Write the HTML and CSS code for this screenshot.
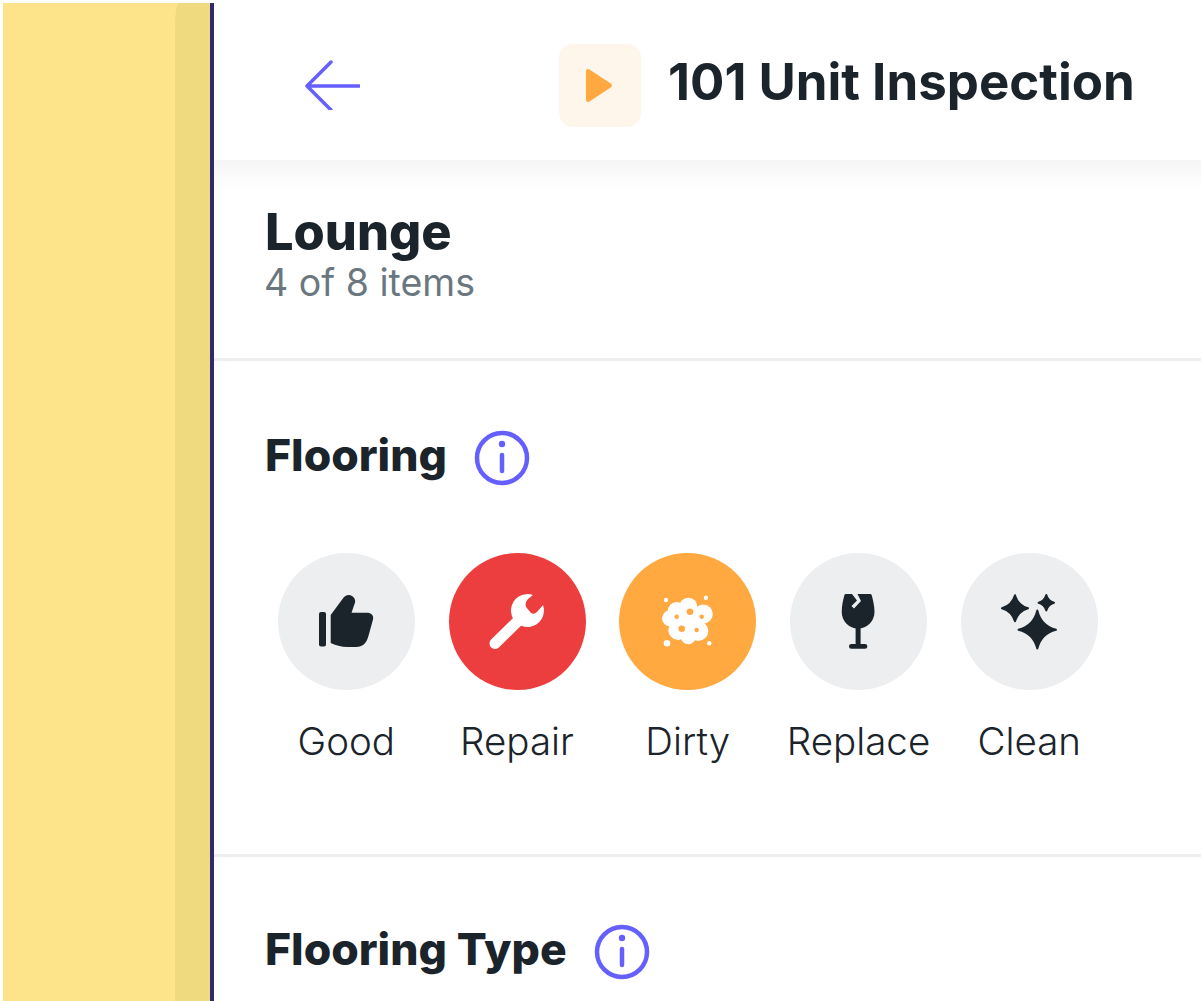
FILE: index.html
```html
<!DOCTYPE html>
<html>
<head>
    <meta charset="UTF-8">
    <title>101 Unit Inspection</title>
    <link rel="stylesheet" href="styles.css">
</head>
<body>
    <div class="screen">
        <div class="side">
            <div class="side-fold"></div>
        </div>
        <main class="panel">
            <header class="topbar">
                <svg class="back" width="56" height="50" viewBox="0 0 56 50"><path d="M27 2 L3 26 L27 50 M3 26 H55" fill="none" stroke="#655ffe" stroke-width="3.5" stroke-linecap="round" stroke-linejoin="round"/></svg>
                <div class="play-box">
                    <svg width="28" height="36" viewBox="0 0 28 36"><path d="M2 3 L24 17.5 L2 32 Z" fill="#ffa940" stroke="#ffa940" stroke-width="4" stroke-linejoin="round"/></svg>
                </div>
                <h1>101 Unit Inspection</h1>
            </header>
            <div class="topbar-shade"></div>

            <section class="room">
                <h2>Lounge</h2>
                <p>4 of 8 items</p>
            </section>

            <section class="group">
                <div class="group-title">
                    <h3>Flooring</h3>
                    <svg class="info" width="56" height="56" viewBox="0 0 56 56"><circle cx="28" cy="28" r="25" fill="none" stroke="#655ffe" stroke-width="4.5"/><circle cx="28" cy="14" r="3.2" fill="#655ffe"/><path d="M28 25 V41" stroke="#655ffe" stroke-width="4.5" stroke-linecap="round"/></svg>
                </div>
                <div class="options">
                    <div class="option">
                        <div class="disc">
                            <svg width="137" height="137" viewBox="0 0 137 137"><rect x="41" y="59" width="7" height="34.5" rx="2" fill="#1b242b"/><path d="M52.7 62 L64.5 46 C67 42 71 41 74 43 C77 45 78 48 76.5 51 L73.5 59.7 H89 C93 59.7 96 62 95 66.5 L91 81 C89 89 86 94 78 94 H70 C63 94 57 92 52.7 90 Z" fill="#1b242b"/></svg>
                        </div>
                        <span>Good</span>
                    </div>
                    <div class="option">
                        <div class="disc disc-red">
                            <svg width="137" height="137" viewBox="0 0 137 137"><path d="M46 90.5 L70 67" stroke="#fff" stroke-width="11" stroke-linecap="round"/><path d="M94 52 A16.5 16.5 0 1 1 84 42 L79 46 Q75.5 50 77 54 L82 60 Q85 62 88 59 Z" fill="#fff"/></svg>
                        </div>
                        <span>Repair</span>
                    </div>
                    <div class="option">
                        <div class="disc disc-orange">
                            <svg width="137" height="137" viewBox="0 0 137 137">
                                <g transform="translate(-6 0)">
                                    <g fill="#fff">
                                        <circle cx="75.3" cy="53.7" r="9"/><circle cx="63.7" cy="58" r="9"/><circle cx="90.3" cy="61" r="9.5"/><circle cx="57" cy="65.3" r="8"/>
                                        <circle cx="65.3" cy="77" r="10"/><circle cx="85.3" cy="78" r="10"/><circle cx="75.3" cy="83.7" r="7.5"/><circle cx="75.3" cy="67" r="15"/>
                                        <circle cx="53" cy="47" r="2.2"/><circle cx="93" cy="44.7" r="2.2"/><circle cx="54" cy="90.3" r="3.3"/><circle cx="96.3" cy="90.3" r="2.2"/>
                                    </g>
                                    <g fill="#ffa940">
                                        <circle cx="77" cy="58.7" r="3.3"/><circle cx="63.7" cy="63.7" r="2.2"/><circle cx="88.7" cy="63.7" r="2.2"/><circle cx="68.7" cy="75.7" r="3.3"/><circle cx="83.7" cy="77" r="2.2"/>
                                    </g>
                                </g>
                            </svg>
                        </div>
                        <span>Dirty</span>
                    </div>
                    <div class="option">
                        <div class="disc">
                            <svg width="137" height="137" viewBox="0 0 137 137"><path d="M56 41 H80 C81 41 81.5 41.5 81.8 42.5 C83 47 84.5 53 84.5 59 C84.5 68 77 75.5 68 75.5 C59 75.5 51.7 68 51.7 59 C51.7 53 53 47 54.3 42.5 C54.6 41.5 55 41 56 41 Z" fill="#1b242b"/><path d="M65.6 74 H70.6 V92 H65.6 Z" fill="#1b242b"/><rect x="59" y="91" width="18.3" height="4.7" rx="2.3" fill="#1b242b"/><path d="M62 41 L67 47.5 L61.5 53 L64 55.5 L71 48 L67.5 41 Z" fill="#edeef0"/></svg>
                        </div>
                        <span>Replace</span>
                    </div>
                    <div class="option">
                        <div class="disc">
                            <svg width="137" height="137" viewBox="0 0 137 137" fill="#1b242b" stroke="#1b242b" stroke-width="2" stroke-linejoin="round"><path d="M54 42.3 Q57 52.3 67 55.3 Q57 58.3 54 68.3 Q51 58.3 41 55.3 Q51 52.3 54 42.3 Z"/><path d="M85.3 42 Q87 48 93 49.7 Q87 51.4 85.3 57.4 Q83.6 51.4 77.6 49.7 Q83.6 48 85.3 42 Z"/><path d="M76.3 57.5 Q80 73 95 76.7 Q80 80.4 76.3 95.5 Q72.6 80.4 57.5 76.7 Q72.6 73 76.3 57.5 Z"/></svg>
                        </div>
                        <span>Clean</span>
                    </div>
                </div>
            </section>

            <section class="group group-last">
                <div class="group-title">
                    <h3>Flooring Type</h3>
                    <svg class="info" width="56" height="56" viewBox="0 0 56 56"><circle cx="28" cy="28" r="25" fill="none" stroke="#655ffe" stroke-width="4.5"/><circle cx="28" cy="14" r="3.2" fill="#655ffe"/><path d="M28 25 V41" stroke="#655ffe" stroke-width="4.5" stroke-linecap="round"/></svg>
                </div>
            </section>
        </main>
    </div>
</body>
</html>
```

FILE: styles.css
```css
html, body {
    margin: 0;
    height: 100%;
    background-color: #fff;
}

body {
    font-family: Inter, "Open Sans", sans-serif;
    color: #1b242b;
    overflow: hidden;
}

.screen {
    display: flex;
    height: 1001px;
    overflow: hidden;
}

.side {
    display: flex;
    justify-content: flex-end;
    width: 207px;
    margin: 3px 0 0 3px;
    background-color: #fde48b;
    border-right: 4px solid #2f2a6b;
}

.side-fold {
    width: 35px;
    background-color: #efda80;
    border-top-left-radius: 4px 24px;
}

.panel {
    flex: 1;
    min-width: 0;
    display: flex;
    flex-direction: column;
}

.topbar {
    display: flex;
    align-items: center;
    height: 160px;
    padding-left: 90px;
    flex-shrink: 0;
    box-sizing: border-box;
}

.back {
    margin-top: 10px;
}

.play-box {
    display: flex;
    align-items: center;
    justify-content: center;
    width: 82px;
    height: 83px;
    margin-left: 199px;
    margin-top: 11px;
    background-color: #fff6eb;
    border-radius: 14px;
}

h1 {
    margin: 2px 0 0 27px;
    font-size: 51px;
    font-weight: 700;
}

.topbar-shade {
    height: 30px;
    margin-bottom: -30px;
    flex-shrink: 0;
    background: linear-gradient(#f5f5f5, #fff);
}

.room {
    height: 201px;
    padding-left: 51px;
    box-sizing: border-box;
    flex-shrink: 0;
    border-bottom: 3px solid #eeeeee;
}

.room h2 {
    margin: 0;
    padding-top: 43px;
    font-size: 50.5px;
    line-height: 58px;
    font-weight: 800;
}

.room p {
    margin: 0 0 0 -1px;
    font-size: 37.5px;
    line-height: 44px;
    color: #6b7780;
}

.group {
    height: 496px;
    padding-left: 51px;
    box-sizing: border-box;
    flex-shrink: 0;
    border-bottom: 3px solid #eeeeee;
}

.group-last {
    border-bottom: 0;
}

.group-title {
    display: flex;
    align-items: center;
    gap: 27.5px;
    padding-top: 69px;
}

.group-last .group-title {
    padding-top: 67px;
}

.group-title h3 {
    margin: 0 0 6px;
    font-size: 44.5px;
    line-height: 50px;
    font-weight: 800;
}

.options {
    display: flex;
    gap: 33.75px;
    margin-top: 67px;
    margin-left: 12.75px;
}

.option {
    display: flex;
    flex-direction: column;
    align-items: center;
    width: 137px;
}

.option span {
    margin-top: 29px;
    font-size: 38.5px;
    font-weight: 300;
    line-height: 44px;
    white-space: nowrap;
}

.disc {
    width: 137px;
    height: 137px;
    border-radius: 50%;
    background-color: #edeef0;
}

.disc svg {
    display: block;
}

.disc-red {
    background-color: #ed3e3f;
}

.disc-orange {
    background-color: #ffa940;
}
```
